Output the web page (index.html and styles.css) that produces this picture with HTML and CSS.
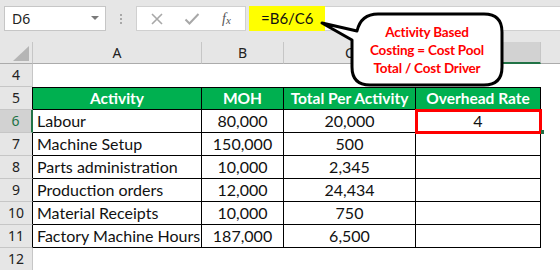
FILE: index.html
```html
<!DOCTYPE html>
<html>
<head>
<meta charset="utf-8">
<link rel="stylesheet" href="styles.css">
</head>
<body>
<div class="app">
  <div class="topbar">
    <div class="namebox"><span class="ref">D6</span><span class="caret"></span></div>
    <div class="grip"><i></i><i></i><i></i></div>
    <div class="fxbtns">
      <svg class="ico" width="14" height="14" viewBox="0 0 14 14"><path d="M2 2 L12 12 M12 2 L2 12" stroke="#a8a8a8" stroke-width="1.6" fill="none"/></svg>
      <svg class="ico" width="16" height="14" viewBox="0 0 16 14"><path d="M1.5 7.5 L5.5 11.5 L14.5 2" stroke="#a8a8a8" stroke-width="2" fill="none"/></svg>
      <span class="fx">f<sub>x</sub></span>
    </div>
    <div class="formula"><span class="hl">=B6/C6</span></div>
  </div>

  <div class="sheet">
    <div class="row colhead">
      <div class="corner"><svg width="16" height="15" viewBox="0 0 16 15"><path d="M16 0 L16 15 L0 15 Z" fill="#b5b5b5"/></svg></div>
      <div class="ch">A</div><div class="ch">B</div><div class="ch">C</div><div class="ch sel"></div><div class="ch last"></div>
    </div>
    <div class="row"><div class="rh">4</div><div></div><div></div><div></div><div></div><div></div></div>
    <div class="row t head"><div class="rh">5</div><div class="c">Activity</div><div class="c">MOH</div><div class="c">Total Per Activity</div><div class="c">Overhead Rate</div><div></div></div>
    <div class="row t"><div class="rh active">6</div><div class="c l">Labour</div><div class="c">80,000</div><div class="c">20,000</div><div class="c cur">4</div><div></div></div>
    <div class="row t"><div class="rh">7</div><div class="c l">Machine Setup</div><div class="c">150,000</div><div class="c">500</div><div class="c"></div><div></div></div>
    <div class="row t"><div class="rh">8</div><div class="c l">Parts administration</div><div class="c">10,000</div><div class="c">2,345</div><div class="c"></div><div></div></div>
    <div class="row t"><div class="rh">9</div><div class="c l">Production orders</div><div class="c">12,000</div><div class="c">24,434</div><div class="c"></div><div></div></div>
    <div class="row t"><div class="rh">10</div><div class="c l">Material Receipts</div><div class="c">10,000</div><div class="c">750</div><div class="c"></div><div></div></div>
    <div class="row t"><div class="rh">11</div><div class="c l">Factory Machine Hours</div><div class="c">187,000</div><div class="c">6,500</div><div class="c"></div><div></div></div>
    <div class="row"><div class="rh">12</div><div></div><div></div><div></div><div></div><div></div></div>
  </div>

  <svg class="callout" width="560" height="100" viewBox="0 0 560 100">
    <path d="M322 23 L357 31 Q361 14 378 14 H484 Q502 14 502 32 V67 Q502 85 484 85 H370 Q352 85 352 67 V40 Z" fill="#fff" stroke="#000" stroke-width="3" stroke-linejoin="round"/>
  </svg>
  <div class="callout-text">Activity Based<br>Costing = Cost Pool<br>Total / Cost Driver</div>
</div>
</body>
</html>
```

FILE: styles.css
```css
html, body { margin: 0; padding: 0; background: #fff; }
.app {
  position: relative;
  width: 560px;
  height: 270px;
  overflow: hidden;
  font-family: Lato, "Liberation Sans", sans-serif;
}
.topbar {
  height: 42px;
  box-sizing: border-box;
  background: #e6e6e6;
  display: flex;
  align-items: flex-start;
  padding: 6px 0 0 4px;
}
.namebox {
  width: 102px;
  height: 25px;
  box-sizing: border-box;
  background: #fff;
  border: 1px solid #c6c6c6;
  display: flex;
  align-items: center;
  justify-content: space-between;
  padding: 0 6px 0 7px;
  font-family: "Noto Sans", "Open Sans", sans-serif;
  font-size: 14px;
  color: #222;
}
.caret {
  width: 0; height: 0;
  border-left: 4px solid transparent;
  border-right: 4px solid transparent;
  border-top: 4px solid #7a7a7a;
  margin-top: -2px;
}
.grip {
  width: 30px;
  height: 25px;
  display: flex;
  flex-direction: column;
  align-items: center;
  justify-content: center;
  gap: 2px;
}
.grip i { display: block; width: 2px; height: 2px; background: #a8a8a8; }
.fxbtns {
  width: 110px;
  height: 25px;
  box-sizing: border-box;
  background: #fff;
  border: 1px solid #d0d0d0;
  display: flex;
  align-items: center;
  padding: 0 0 0 13px;
  gap: 20px;
}
.fx {
  font-family: "Liberation Serif", serif;
  font-style: italic;
  font-size: 14px;
  color: #555;
  margin-left: 2px;
}
.fx sub { font-size: 11px; vertical-align: -1px; }
.formula {
  flex: 1;
  margin-left: 3px;
  height: 25px;
  box-sizing: border-box;
  background: #fff;
  border: 1px solid #d0d0d0;
  border-right: none;
  display: flex;
}
.hl {
  width: 76px;
  background: #ffff00;
  margin: -1px 0 -1px -1px;
  box-sizing: border-box;
  padding-left: 12px;
  line-height: 25px;
  font-size: 15px;
  color: #111;
}
.sheet { display: flex; flex-direction: column; }
.row {
  display: grid;
  grid-template-columns: 33px 169px 82px 132px 125px 1fr;
  height: 23px;
}
.row > div { box-sizing: border-box; }
.colhead { height: 22px; background: #e6e6e6; }
.corner {
  border-right: 1px solid #c6c6c6;
  border-bottom: 1px solid #ababab;
  display: flex;
  align-items: flex-end;
  justify-content: flex-end;
  padding: 0 3px 2px 0;
}
.ch {
  border-right: 1px solid #c6c6c6;
  border-bottom: 1px solid #ababab;
  text-align: center;
  font-family: "Noto Sans", "Open Sans", sans-serif;
  font-size: 14px;
  line-height: 21px;
  color: #222;
}
.ch.last { border-right: none; }
.ch.sel { background: #d2d2d2; border-bottom: 2px solid #217346; }
.rh {
  background: #e6e6e6;
  border-right: 1px solid #c6c6c6;
  border-bottom: 1px solid #c6c6c6;
  text-align: center;
  font-family: "Noto Sans", "Open Sans", sans-serif;
  font-size: 14px;
  line-height: 22px;
  color: #222;
}
.t .rh { border-right-color: #000; }
.rh.active { background: #d2d2d2; color: #217346; border-right: 2px solid #217346; }
.c {
  border-right: 1px solid #000;
  border-bottom: 1px solid #000;
  text-align: center;
  font-size: 16px;
  line-height: 22px;
  color: #111;
  white-space: nowrap;
}
.c.l { text-align: left; padding-left: 4px; }
.head .c {
  background: #00b050;
  color: #fff;
  font-weight: bold;
  font-size: 15.5px;
  border-top: 1px solid #000;
  line-height: 21px;
}
.cur { position: relative; outline: 3px solid #ff0000; outline-offset: -2px; }
.cur::after {
  content: "";
  position: absolute;
  right: -4px;
  bottom: -2px;
  width: 3px;
  height: 4px;
  background: #217346;
}
.callout {
  position: absolute;
  left: 0;
  top: 0;
}
.callout-text {
  position: absolute;
  left: 352px;
  width: 150px;
  top: 23px;
  text-align: center;
  color: #ff0000;
  font-weight: bold;
  font-size: 13.5px;
  letter-spacing: -0.2px;
  line-height: 18px;
}
```
